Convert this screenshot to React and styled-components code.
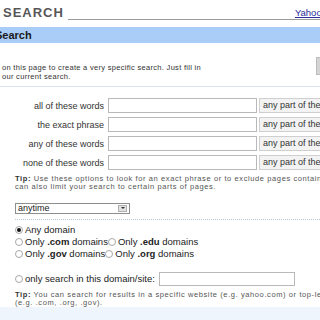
import React from "react";
import styled, { createGlobalStyle } from "styled-components";

const GlobalStyle = createGlobalStyle`
  html, body {
    margin: 0;
    padding: 0;
    width: 320px;
    height: 320px;
    overflow: hidden;
    background: #fff;
    font-family: "Liberation Sans", Arial, sans-serif;
    color: #222;
  }
`;

const Page = styled.div`
  width: 440px;
  display: flex;
  flex-direction: column;
`;

const Header = styled.div`
  display: flex;
  align-items: flex-end;
  height: 20px;
  padding-left: 3px;
`;

const Title = styled.div`
  font-size: 13px;
  font-weight: bold;
  letter-spacing: 1px;
  color: #575757;
  line-height: 13px;
  margin-bottom: 1px;
`;

const Rule = styled.div`
  flex: 1;
  height: 19px;
  margin-left: 4px;
  border-bottom: 1px solid #9c9c9c;
  padding-left: 227px;
  display: flex;
  align-items: center;
`;

const TopLink = styled.a`
  font-size: 9.5px;
  color: #2b2b9a;
  text-decoration: underline;
  white-space: nowrap;
  margin-top: 6px;
`;

const Bar = styled.div`
  margin-top: 7px;
  height: 16px;
  background: #a9cdf6;
  font-size: 11px;
  font-weight: bold;
  line-height: 16px;
  color: #1a1a1a;
  text-indent: -5px;
`;

const IntroRow = styled.div`
  display: flex;
  align-items: flex-start;
  margin-top: 14px;
`;

const IntroText = styled.p`
  margin: 6px 0 0 2px;
  width: 300px;
  font-size: 7.5px;
  letter-spacing: 0.3px;
  line-height: 9px;
  color: #333;
`;

const GoButton = styled.div`
  margin-left: 14px;
  width: 60px;
  height: 18px;
  box-sizing: border-box;
  background: #d4d4d4;
  border: 1px solid #bdbdbd;
`;

const Divider = styled.div`
  margin-top: 5px;
  border-top: 1px solid #d6e3ef;
`;

const Fields = styled.div`
  margin-top: 11px;
  display: flex;
  flex-direction: column;
  gap: 4px;
`;

const FieldRow = styled.div`
  display: flex;
  align-items: center;
  height: 15px;
`;

const FieldLabel = styled.label`
  width: 104px;
  text-align: right;
  font-size: 9px;
  color: #333;
  white-space: nowrap;
`;

const TextBox = styled.div`
  margin-left: ${(p) => p.$gap || 4}px;
  width: ${(p) => p.$w}px;
  height: ${(p) => p.$h || 15}px;
  box-sizing: border-box;
  border: 1px solid #b9b9b9;
  background: #fff;
`;

const PartSelect = styled.div`
  margin-left: 2px;
  width: 110px;
  height: 15px;
  box-sizing: border-box;
  border: 1px solid #cfcfcf;
  background: #f3f3f3;
  font-size: 9px;
  line-height: 13px;
  padding-left: 3px;
  color: #333;
  white-space: nowrap;
`;

const Tip = styled.p`
  margin: ${(p) => p.$top}px 0 0;
  padding-left: 15px;
  font-size: 7.5px;
  letter-spacing: 0.6px;
  line-height: 8px;
  color: #555;
  white-space: nowrap;
  b {
    color: #333;
  }
`;

const DateSelect = styled.div`
  margin: 12px 0 0 15px;
  width: 115px;
  height: 11px;
  box-sizing: border-box;
  border: 1px solid #8e8e8e;
  display: flex;
  align-items: center;
  justify-content: space-between;
  font-size: 9px;
  color: #222;
  padding: 0 2px;
`;

const Arrow = styled.span`
  width: 9px;
  height: 7px;
  box-sizing: border-box;
  background: #e2e2e2;
  border: 1px solid #b0b0b0;
  display: flex;
  align-items: center;
  justify-content: center;
  &::after {
    content: "";
    border-left: 2px solid transparent;
    border-right: 2px solid transparent;
    border-top: 2px solid #333;
  }
`;

const Dotted = styled.div`
  margin: 5px 0 0 15px;
  border-top: 1px dotted #b5c6d6;
`;

const Radios = styled.div`
  margin-top: 4px;
  padding-left: 15px;
  display: flex;
  flex-direction: column;
`;

const RadioRow = styled.div`
  display: flex;
  align-items: center;
  font-size: 9.5px;
  color: #222;
  white-space: nowrap;
  margin-top: ${(p) => p.$top || 0}px;
  height: ${(p) => p.$h || 12}px;
`;

const Radio = styled.span`
  width: 8px;
  height: 8px;
  box-sizing: border-box;
  border-radius: 50%;
  border: 1px solid #a8a8a8;
  background: #fff;
  margin-right: 2px;
  display: flex;
  align-items: center;
  justify-content: center;
  &::after {
    content: "";
    width: 4px;
    height: 4px;
    border-radius: 50%;
    background: ${(p) => (p.$on ? "#111" : "transparent")};
  }
`;

const Band = styled.div`
  height: 20px;
  background: #eef5fc;
`;

const fields = [
  "all of these words",
  "the exact phrase",
  "any of these words",
  "none of these words",
];

export default function App() {
  return (
    <>
      <GlobalStyle />
      <Page>
        <Header>
          <Title>SEARCH</Title>
          <Rule>
            <TopLink href="#">Yahoo! - Search Home - Help</TopLink>
          </Rule>
        </Header>
        <Bar>Search</Bar>
        <IntroRow>
          <IntroText>
            on this page to create a very specific search. Just fill in
            <br />
            our current search.
          </IntroText>
          <GoButton />
        </IntroRow>
        <Divider />
        <Fields>
          {fields.map((f) => (
            <FieldRow key={f}>
              <FieldLabel>{f}</FieldLabel>
              <TextBox $w={149} />
              <PartSelect>any part of the page</PartSelect>
            </FieldRow>
          ))}
        </Fields>
        <Tip $top={4.5}>
          <b>Tip:</b> Use these options to look for an exact phrase or to
          exclude pages containing certain words.
          <br />
          can also limit your search to certain parts of pages.
        </Tip>
        <DateSelect>
          anytime
          <Arrow />
        </DateSelect>
        <Dotted />
        <Radios>
          <RadioRow>
            <Radio $on />
            Any domain
          </RadioRow>
          <RadioRow>
            <Radio />
            Only <b>&nbsp;.com&nbsp;</b> domains
            <Radio />
            Only <b>&nbsp;.edu&nbsp;</b> domains
          </RadioRow>
          <RadioRow>
            <Radio />
            Only <b>&nbsp;.gov&nbsp;</b> domains
            <Radio />
            Only <b>&nbsp;.org&nbsp;</b> domains
          </RadioRow>
          <RadioRow $top={12} $h={14}>
            <Radio />
            only search in this domain/site:
            <TextBox $w={136} $h={14} $gap={4} />
          </RadioRow>
        </Radios>
        <Tip $top={5.5}>
          <b>Tip:</b> You can search for results in a specific website (e.g.
          yahoo.com) or top-level domains
          <br />
          (e.g. .com, .org, .gov).
        </Tip>
        <Band />
      </Page>
    </>
  );
}
